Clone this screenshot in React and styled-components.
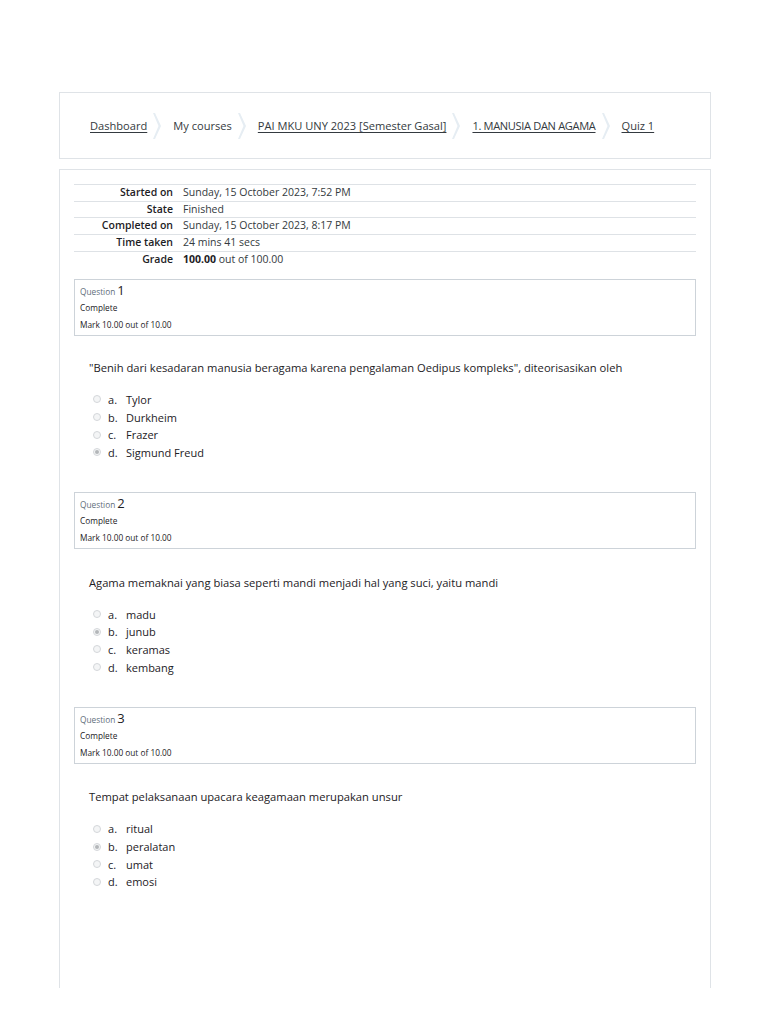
import React from "react";
import styled, { createGlobalStyle } from "styled-components";

const Global = createGlobalStyle`
  html, body { margin: 0; padding: 0; background: #fff; }
  body { font-family: "Open Sans", "Noto Sans", sans-serif; color: #1d2125; }
`;

const Page = styled.div`
  width: 768px;
  height: 1024px;
  overflow: hidden;
  padding: 92px 57px 0 59px;
  box-sizing: border-box;
`;

const Card = styled.div`
  border: 1px solid #dfe3e7;
  background: #fff;
  box-sizing: border-box;
`;

const BreadcrumbCard = styled(Card)`
  height: 67px;
  display: flex;
  align-items: center;
  padding: 0 30px;
`;

const Crumbs = styled.nav`
  display: flex;
  align-items: center;
  font-size: 11.1px;
  color: #343a40;
`;

const Crumb = styled.span`
  color: #343a40;
  text-decoration: ${(p) => (p.$link ? "underline" : "none")};
  text-underline-offset: 2px;
  letter-spacing: ${(p) => (p.$tight ? "-0.35px" : "normal")};
  white-space: nowrap;
`;

const Sep = styled.svg`
  width: 8px;
  height: 26px;
  margin: 0 12px 0 6px;
  flex: none;
`;

const MainCard = styled(Card)`
  margin-top: 10px;
  height: 819px;
  border-bottom: none;
  padding: 14px 14px 0 14px;
`;

const Summary = styled.table`
  width: 100%;
  border-collapse: collapse;
  font-size: 10.5px;
  margin-bottom: 11px;
`;

const Row = styled.tr`
  border-top: 1px solid #dee2e6;
`;

const Label = styled.th`
  width: 99px;
  text-align: right;
  font-weight: 600;
  color: #1d2125;
  padding: 0 10px 0 0;
  line-height: 15.7px;
  white-space: nowrap;
`;

const Value = styled.td`
  color: #343a40;
  padding: 0;
  line-height: 15.7px;
`;

const Strong = styled.b`
  font-weight: 700;
  color: #1d2125;
`;

const QBlock = styled.div`
  margin-bottom: ${(p) => p.$mb}px;
`;

const InfoBox = styled.div`
  border: 1px solid #cdd3d9;
  height: 57px;
  box-sizing: border-box;
  padding: 2px 5px 0;
  display: flex;
  flex-direction: column;
`;

const InfoLine = styled.div`
  font-size: 8.3px;
  line-height: 17px;
  height: 17px;
  color: #1d2125;
`;

const QLabel = styled.span`
  color: #5f6e7b;
  font-size: 8.3px;
`;

const QNo = styled.span`
  font-size: 13px;
  font-weight: 500;
  color: #1d2125;
  margin-left: 2px;
`;

const Content = styled.div`
  padding: ${(p) => p.$pt}px 0 0 15px;
`;

const QText = styled.div`
  font-size: 11.2px;
  line-height: 17px;
  color: #1d2125;
`;

const Answers = styled.div`
  margin-top: ${(p) => p.$mt}px;
  padding-left: 4px;
  display: flex;
  flex-direction: column;
`;

const Option = styled.div`
  display: flex;
  align-items: center;
  height: 17.7px;
  font-size: 11px;
  color: #1d2125;
`;

const Radio = styled.span`
  width: 8px;
  height: 8px;
  border-radius: 50%;
  border: 1px solid #d4d7da;
  background: #f4f5f6;
  box-sizing: border-box;
  display: inline-flex;
  align-items: center;
  justify-content: center;
  margin-right: 7px;
  flex: none;
  &::after {
    content: "";
    width: 4px;
    height: 4px;
    border-radius: 50%;
    background: ${(p) => (p.$checked ? "#b3b6b9" : "transparent")};
  }
`;

const Letter = styled.span`
  width: 18px;
  flex: none;
`;

const Chevron = () => (
  <Sep viewBox="0 0 8 26">
    <polygon points="0,0 2,0 8,13 2,26 0,26 5.5,13" fill="#e6edf3" />
  </Sep>
);

const crumbs = [
  { t: "Dashboard", link: true },
  { t: "My courses", link: false },
  { t: "PAI MKU UNY 2023 [Semester Gasal]", link: true },
  { t: "1. MANUSIA DAN AGAMA", link: true, tight: true },
  { t: "Quiz 1", link: true },
];

const summary = [
  ["Started on", "Sunday, 15 October 2023, 7:52 PM"],
  ["State", "Finished"],
  ["Completed on", "Sunday, 15 October 2023, 8:17 PM"],
  ["Time taken", "24 mins 41 secs"],
  ["Grade", <><Strong>100.00</Strong> out of 100.00</>],
];

const questions = [
  {
    n: 1,
    text: "\"Benih dari kesadaran manusia beragama karena pengalaman Oedipus kompleks\", diteorisasikan oleh",
    opts: ["Tylor", "Durkheim", "Frazer", "Sigmund Freud"],
    sel: 3,
    pt: 23,
    mt: 15,
    mb: 31,
  },
  {
    n: 2,
    text: "Agama memaknai yang biasa seperti mandi menjadi hal yang suci, yaitu mandi",
    opts: ["madu", "junub", "keramas", "kembang"],
    sel: 1,
    pt: 25,
    mt: 14,
    mb: 31,
  },
  {
    n: 3,
    text: "Tempat pelaksanaan upacara keagamaan merupakan unsur",
    opts: ["ritual", "peralatan", "umat", "emosi"],
    sel: 1,
    pt: 24,
    mt: 15,
    mb: 0,
  },
];

export default function App() {
  return (
    <>
      <Global />
      <Page>
        <BreadcrumbCard>
          <Crumbs>
            {crumbs.map((c, i) => (
              <React.Fragment key={c.t}>
                <Crumb $link={c.link} $tight={c.tight}>{c.t}</Crumb>
                {i < crumbs.length - 1 && <Chevron />}
              </React.Fragment>
            ))}
          </Crumbs>
        </BreadcrumbCard>
        <MainCard>
          <Summary>
            <tbody>
              {summary.map(([l, v]) => (
                <Row key={l}>
                  <Label>{l}</Label>
                  <Value>{v}</Value>
                </Row>
              ))}
            </tbody>
          </Summary>
          {questions.map((q) => (
            <QBlock key={q.n} $mb={q.mb}>
              <InfoBox>
                <InfoLine>
                  <QLabel>Question</QLabel>
                  <QNo>{q.n}</QNo>
                </InfoLine>
                <InfoLine>Complete</InfoLine>
                <InfoLine>Mark 10.00 out of 10.00</InfoLine>
              </InfoBox>
              <Content $pt={q.pt}>
                <QText>{q.text}</QText>
                <Answers $mt={q.mt}>
                  {q.opts.map((o, i) => (
                    <Option key={o}>
                      <Radio $checked={i === q.sel} />
                      <Letter>{"abcd"[i]}.</Letter>
                      {o}
                    </Option>
                  ))}
                </Answers>
              </Content>
            </QBlock>
          ))}
        </MainCard>
      </Page>
    </>
  );
}
